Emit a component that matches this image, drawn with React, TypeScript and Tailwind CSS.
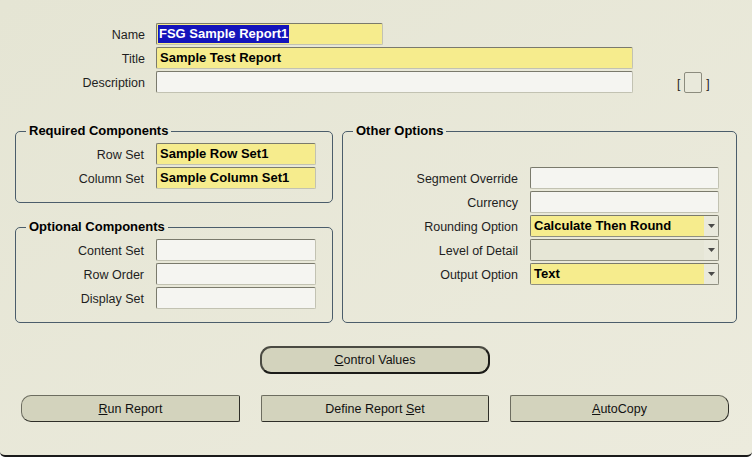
import React from "react";

type Tone = "white" | "yellow" | "beige";

const toneBg: Record<Tone, string> = {
  white: "bg-[#f5f5f1]",
  yellow: "bg-[#f6ec8d]",
  beige: "bg-[#e6e6d6]",
};

function Field({
  value,
  tone = "white",
  className = "",
  selected = false,
}: {
  value?: string;
  tone?: Tone;
  className?: string;
  selected?: boolean;
}) {
  return (
    <div
      className={`h-[22px] flex items-center px-[1px] border border-t-[#7a7a6c] border-l-[#7a7a6c] border-r-[#c2c2b2] border-b-[#c2c2b2] rounded-[2px] text-[13px] font-bold text-black overflow-hidden whitespace-nowrap ${toneBg[tone]} ${className}`}
    >
      {selected ? (
        <span className="bg-[#1414bb] text-white h-[18px] leading-[18px] pl-[1px] pr-[1px]">{value}</span>
      ) : (
        <span className="pl-[2px] leading-[18px]">{value}</span>
      )}
    </div>
  );
}

function Select({ value, tone = "yellow" }: { value?: string; tone?: Tone }) {
  return (
    <div className="h-[22px] w-[189px] flex border border-t-[#7a7a6c] border-l-[#7a7a6c] border-r-[#8f8f80] border-b-[#8f8f80] rounded-[2px] overflow-hidden">
      <div className={`flex-1 flex items-center pl-[3px] text-[13px] font-bold text-black ${toneBg[tone]}`}>{value}</div>
      <div className="w-[14px] flex items-center justify-center bg-[#e9e9dc]">
        <svg width="7" height="4" viewBox="0 0 7 4">
          <path d="M0 0h7L3.5 4z" fill="#4a4a48" />
        </svg>
      </div>
    </div>
  );
}

function Label({ children }: { children: React.ReactNode }) {
  return <div className="h-[22px] text-right text-[12.5px] leading-[24px] text-[#1e1e1e] whitespace-nowrap">{children}</div>;
}

function Group({ title, className = "", children }: { title: string; className?: string; children: React.ReactNode }) {
  return (
    <fieldset className={`border border-[#4b5d6b] rounded-[5px] ${className}`}>
      <legend className="ml-[10px] px-[3px] text-[13px] font-bold leading-[16px] text-black">{title}</legend>
      {children}
    </fieldset>
  );
}

function Button({
  children,
  shape,
  className = "",
}: {
  children: React.ReactNode;
  shape: "left" | "mid" | "right" | "pill";
  className?: string;
}) {
  const shapes = {
    left: "rounded-l-[10px] rounded-r-[2px] border border-[#6d6d60] border-b-[#2e2e28] border-r-[#2e2e28]",
    mid: "rounded-[2px] border border-[#6d6d60] border-b-[#2e2e28] border-r-[#2e2e28]",
    right: "rounded-r-[10px] rounded-l-[2px] border border-[#6d6d60] border-b-[#2e2e28] border-r-[#2e2e28]",
    pill: "rounded-[11px] border-2 border-[#1b1b18] border-t-[#4a4a42] border-l-[#4a4a42]",
  };
  return (
    <div
      className={`flex items-center justify-center bg-[#d3d3bd] text-[12.5px] text-[#111] pt-[1px] ${shapes[shape]} ${className}`}
    >
      {children}
    </div>
  );
}

export default function App() {
  return (
    <div className="w-[752px] h-[457px] overflow-hidden bg-gradient-to-br from-[#e5e5d4] to-[#ecebdd] border-b-2 border-[#1a1a1a] rounded-b-[5px] font-['Liberation_Sans',Arial,sans-serif] flex flex-col pt-[23px]">
      {/* Header fields */}
      <div className="grid grid-cols-[145px_auto] gap-x-[11px] gap-y-[2px] items-center">
        <Label>Name</Label>
        <Field value="FSG Sample Report1" tone="yellow" selected className="w-[227px]" />
        <Label>Title</Label>
        <Field value="Sample Test Report" tone="yellow" className="w-[477px]" />
        <Label>Description</Label>
        <div className="flex items-center">
          <Field className="w-[477px]" />
          <div className="ml-[44px] flex items-center gap-[4px] text-[12px] text-[#222]">
            <span className="pt-[3px]">[</span>
            <div className="w-[18px] h-[21px] border border-[#8c8c7e] rounded-[2px] bg-[#e9e9db]" />
            <span className="pt-[3px]">]</span>
          </div>
        </div>
      </div>

      {/* Groups */}
      <div className="flex gap-[9px] pl-[15px] mt-[30px]">
        <div className="w-[318px] flex flex-col gap-[16px]">
          <Group title="Required Components" className="h-[80px]">
            <div className="grid grid-cols-[128px_160px] gap-x-[12px] gap-y-[2px] pt-[4px]">
              <Label>Row Set</Label>
              <Field value="Sample Row Set1" tone="yellow" />
              <Label>Column Set</Label>
              <Field value="Sample Column Set1" tone="yellow" />
            </div>
          </Group>
          <Group title="Optional Components" className="h-[104px]">
            <div className="grid grid-cols-[128px_160px] gap-x-[12px] gap-y-[2px] pt-[4px]">
              <Label>Content Set</Label>
              <Field />
              <Label>Row Order</Label>
              <Field />
              <Label>Display Set</Label>
              <Field />
            </div>
          </Group>
        </div>
        <Group title="Other Options" className="w-[395px] h-[200px]">
          <div className="grid grid-cols-[175px_189px] gap-x-[12px] gap-y-[2px] pt-[28px]">
            <Label>Segment Override</Label>
            <Field />
            <Label>Currency</Label>
            <Field />
            <Label>Rounding Option</Label>
            <Select value="Calculate Then Round" />
            <Label>Level of Detail</Label>
            <Select tone="beige" />
            <Label>Output Option</Label>
            <Select value="Text" />
          </div>
        </Group>
      </div>

      {/* Buttons */}
      <div className="flex pl-[260px] mt-[23px]">
        <Button shape="pill" className="w-[230px] h-[28px]">
          <span>
            <span className="underline">C</span>ontrol Values
          </span>
        </Button>
      </div>
      <div className="flex gap-[21px] pl-[21px] mt-[21px]">
        <Button shape="left" className="w-[219px] h-[27px]">
          <span>
            <span className="underline">R</span>un Report
          </span>
        </Button>
        <Button shape="mid" className="w-[228px] h-[27px]">
          <span>
            Define Report <span className="underline">S</span>et
          </span>
        </Button>
        <Button shape="right" className="w-[219px] h-[27px]">
          <span>
            <span className="underline">A</span>utoCopy
          </span>
        </Button>
      </div>
    </div>
  );
}
